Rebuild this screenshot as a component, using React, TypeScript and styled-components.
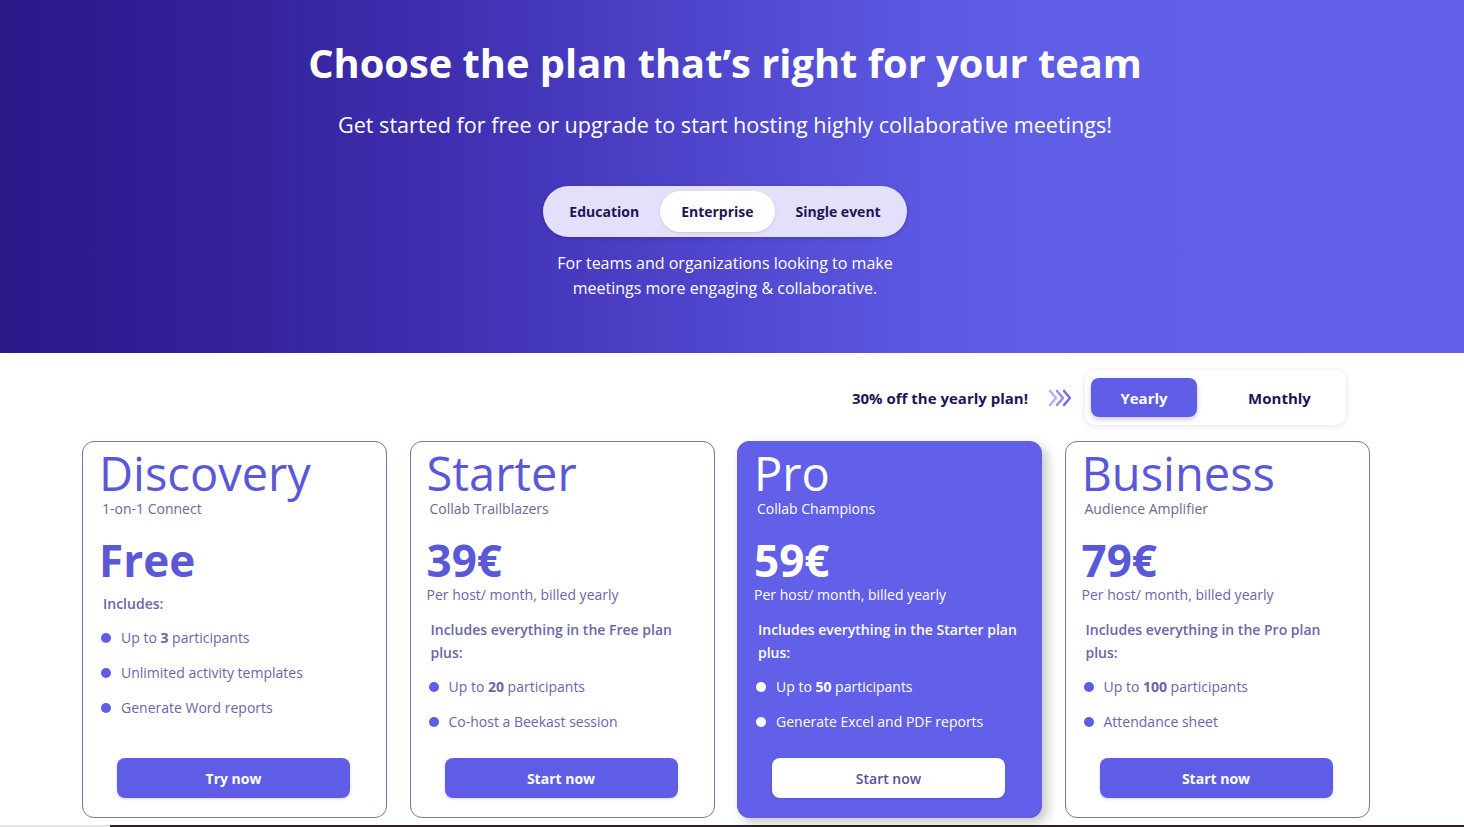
import React, { useState } from "react";
import styled, { createGlobalStyle, css } from "styled-components";

const GlobalStyle = createGlobalStyle`
  html, body { margin: 0; padding: 0; background: #ffffff; }
  body { font-family: "Open Sans", "Noto Sans", sans-serif; -webkit-font-smoothing: antialiased; }
  * { box-sizing: border-box; }
`;

const PURPLE = "#5f5de6";
const NAVY = "#1d1652";

const Page = styled.div`
  width: 1464px;
  min-height: 827px;
  overflow: hidden;
`;

const Hero = styled.section`
  height: 353px;
  background: linear-gradient(90deg, #2c1789 0%, #33219a 15%, #4232b4 33%, #4f45cc 48%, #5b57e0 62%, #615fe8 75%, #6360e9 100%);
  display: flex;
  flex-direction: column;
  align-items: center;
  color: #ffffff;
  padding: 37px 14px 0 0;
`;

const Title = styled.h1`
  margin: 0;
  font-size: 39.8px;
  line-height: 52px;
  font-weight: 700;
`;

const Subtitle = styled.p`
  margin: 21px 0 0;
  font-size: 21.6px;
  line-height: 30px;
  font-weight: 400;
`;

const TabPill = styled.div`
  margin-top: 46px;
  display: flex;
  padding: 5px;
  border-radius: 26px;
  background: #e2e0fa;
  box-shadow: 0 1px 4px rgba(20, 10, 90, 0.25);
`;

const Tab = styled.button<{ $active?: boolean }>`
  border: 0;
  height: 41px;
  padding: 0 21px;
  border-radius: 21px;
  font-family: inherit;
  font-size: 14px;
  font-weight: 700;
  color: ${NAVY};
  background: transparent;
  cursor: pointer;
  ${(p) =>
    p.$active &&
    css`
      background: #ffffff;
      box-shadow: 0 1px 3px rgba(20, 10, 90, 0.12);
    `}
`;

const Description = styled.p`
  margin: 14px 0 0;
  width: 350px;
  text-align: center;
  font-size: 16px;
  line-height: 25px;
`;

const Main = styled.main`
  padding: 17px 0 0 82px;
`;

const Container = styled.div`
  width: 1287px;
`;

const BillingRow = styled.div`
  display: flex;
  justify-content: flex-end;
  align-items: center;
  padding-right: 23px;
`;

const Promo = styled.span`
  font-size: 15px;
  font-weight: 700;
  color: ${NAVY};
`;

const Chevrons = styled.svg`
  margin: 0 13px 0 19px;
  display: block;
`;

const BillingToggle = styled.div`
  width: 261px;
  height: 55px;
  padding: 8px 6px;
  display: flex;
  align-items: stretch;
  background: #ffffff;
  border-radius: 10px;
  box-shadow: 0 1px 6px rgba(30, 20, 90, 0.12);
`;

const PeriodButton = styled.button<{ $active?: boolean }>`
  border: 0;
  font-family: inherit;
  font-size: 15px;
  font-weight: 700;
  border-radius: 8px;
  cursor: pointer;
  ${(p) =>
    p.$active
      ? css`
          width: 106px;
          background: ${PURPLE};
          color: #ffffff;
          box-shadow: 0 2px 5px rgba(70, 60, 200, 0.3);
        `
      : css`
          flex: 1;
          padding-left: 28px;
          background: transparent;
          color: ${NAVY};
        `}
`;

const Cards = styled.div`
  margin-top: 16px;
  display: grid;
  grid-template-columns: repeat(4, 305px);
  column-gap: 22.5px;
`;

const Card = styled.article<{ $featured?: boolean }>`
  height: 377px;
  display: flex;
  flex-direction: column;
  padding: 6px 18px 19px 16px;
  border-radius: 12px;
  border: 1px solid ${(p) => (p.$featured ? "#6260e8" : "#7773b4")};
  background: ${(p) => (p.$featured ? "#6260e8" : "#ffffff")};
  color: ${(p) => (p.$featured ? "#ffffff" : "#6a66a8")};
  box-shadow: ${(p) => (p.$featured ? "5px 5px 12px rgba(0, 0, 0, 0.22)" : "none")};
`;

const PlanName = styled.h2<{ $featured?: boolean }>`
  margin: 0;
  font-size: 47px;
  line-height: 50px;
  font-weight: 400;
  color: ${(p) => (p.$featured ? "#ffffff" : "#5b58d8")};
`;

const PlanTag = styled.div<{ $featured?: boolean }>`
  margin: 1px 0 0 3px;
  font-size: 14px;
  line-height: 20px;
  color: ${(p) => (p.$featured ? "#ffffff" : "#6b6896")};
`;

const Price = styled.div<{ $featured?: boolean }>`
  margin-top: 19px;
  font-size: 44px;
  line-height: 44px;
  font-weight: 700;
  color: ${(p) => (p.$featured ? "#ffffff" : "#5b58d8")};
`;

const Billing = styled.div`
  margin-top: 3px;
  font-size: 14px;
  line-height: 20px;
`;

const Includes = styled.div<{ $afterBilling?: boolean }>`
  margin-top: ${(p) => (p.$afterBilling ? "13px" : "10px")};
  padding-left: 4px;
  font-size: 14px;
  line-height: 23px;
  font-weight: 600;
`;

const FeatureList = styled.ul`
  list-style: none;
  margin: 13px 0 0;
  padding: 0 0 0 2px;
  display: flex;
  flex-direction: column;
  gap: 15px;
`;

const Feature = styled.li<{ $featured?: boolean }>`
  display: flex;
  align-items: center;
  gap: 10px;
  font-size: 14px;
  line-height: 20px;
  &::before {
    content: "";
    width: 10px;
    height: 10px;
    border-radius: 50%;
    flex: 0 0 10px;
    background: ${(p) => (p.$featured ? "#ffffff" : PURPLE)};
  }
  b { font-weight: 700; }
`;

const CTA = styled.button<{ $featured?: boolean }>`
  margin: auto auto 0;
  width: 233px;
  height: 40px;
  border: 0;
  border-radius: 8px;
  font-family: inherit;
  font-size: 14px;
  cursor: pointer;
  background: ${(p) => (p.$featured ? "#ffffff" : PURPLE)};
  color: ${(p) => (p.$featured ? "#55529a" : "#ffffff")};
  font-weight: ${(p) => (p.$featured ? 600 : 700)};
  box-shadow: 0 1px 3px rgba(40, 30, 120, 0.2);
`;

const NextSection = styled.div`
  margin-top: 7px;
  height: 20px;
  display: flex;
`;

const NextLeft = styled.div`
  width: 110px;
  background: #e6e6e6;
`;

const NextRight = styled.div`
  flex: 1;
  background: #2a221e;
`;

type Plan = {
  name: string;
  tag: string;
  price: string;
  billing?: string;
  includes: React.ReactNode;
  features: React.ReactNode[];
  cta: string;
  featured?: boolean;
};

const plans: Plan[] = [
  {
    name: "Discovery",
    tag: "1-on-1 Connect",
    price: "Free",
    includes: "Includes:",
    features: [
      <>Up to <b>3</b> participants</>,
      "Unlimited activity templates",
      "Generate Word reports",
    ],
    cta: "Try now",
  },
  {
    name: "Starter",
    tag: "Collab Trailblazers",
    price: "39€",
    billing: "Per host/ month, billed yearly",
    includes: "Includes everything in the Free plan plus:",
    features: [<>Up to <b>20</b> participants</>, "Co-host a Beekast session"],
    cta: "Start now",
  },
  {
    name: "Pro",
    tag: "Collab Champions",
    price: "59€",
    billing: "Per host/ month, billed yearly",
    includes: "Includes everything in the Starter plan plus:",
    features: [<>Up to <b>50</b> participants</>, "Generate Excel and PDF reports"],
    cta: "Start now",
    featured: true,
  },
  {
    name: "Business",
    tag: "Audience Amplifier",
    price: "79€",
    billing: "Per host/ month, billed yearly",
    includes: "Includes everything in the Pro plan plus:",
    features: [<>Up to <b>100</b> participants</>, "Attendance sheet"],
    cta: "Start now",
  },
];

export default function App() {
  const [tab, setTab] = useState("Enterprise");
  const [period, setPeriod] = useState("Yearly");
  return (
    <Page>
      <GlobalStyle />
      <Hero>
        <Title>Choose the plan that’s right for your team</Title>
        <Subtitle>Get started for free or upgrade to start hosting highly collaborative meetings!</Subtitle>
        <TabPill>
          {["Education", "Enterprise", "Single event"].map((t) => (
            <Tab key={t} $active={tab === t} onClick={() => setTab(t)}>
              {t}
            </Tab>
          ))}
        </TabPill>
        <Description>For teams and organizations looking to make meetings more engaging &amp; collaborative.</Description>
      </Hero>
      <Main>
        <Container>
          <BillingRow>
            <Promo>30% off the yearly plan!</Promo>
            <Chevrons width="25" height="20" viewBox="0 0 25 20" fill="none" strokeWidth="2.6" strokeLinecap="round" strokeLinejoin="round">
              <polyline points="3,3 9,10 3,17" stroke="#b3b1f2" />
              <polyline points="10,3 16,10 10,17" stroke="#9491e8" />
              <polyline points="17,3 23,10 17,17" stroke="#7471dd" />
            </Chevrons>
            <BillingToggle>
              {["Yearly", "Monthly"].map((p) => (
                <PeriodButton key={p} $active={period === p} onClick={() => setPeriod(p)}>
                  {p}
                </PeriodButton>
              ))}
            </BillingToggle>
          </BillingRow>
          <Cards>
            {plans.map((p) => (
              <Card key={p.name} $featured={p.featured}>
                <PlanName $featured={p.featured}>{p.name}</PlanName>
                <PlanTag $featured={p.featured}>{p.tag}</PlanTag>
                <Price $featured={p.featured}>{p.price}</Price>
                {p.billing && <Billing>{p.billing}</Billing>}
                <Includes $afterBilling={!!p.billing}>{p.includes}</Includes>
                <FeatureList>
                  {p.features.map((f, i) => (
                    <Feature key={i} $featured={p.featured}>
                      <span>{f}</span>
                    </Feature>
                  ))}
                </FeatureList>
                <CTA $featured={p.featured}>{p.cta}</CTA>
              </Card>
            ))}
          </Cards>
        </Container>
      </Main>
      <NextSection>
        <NextLeft />
        <NextRight />
      </NextSection>
    </Page>
  );
}
